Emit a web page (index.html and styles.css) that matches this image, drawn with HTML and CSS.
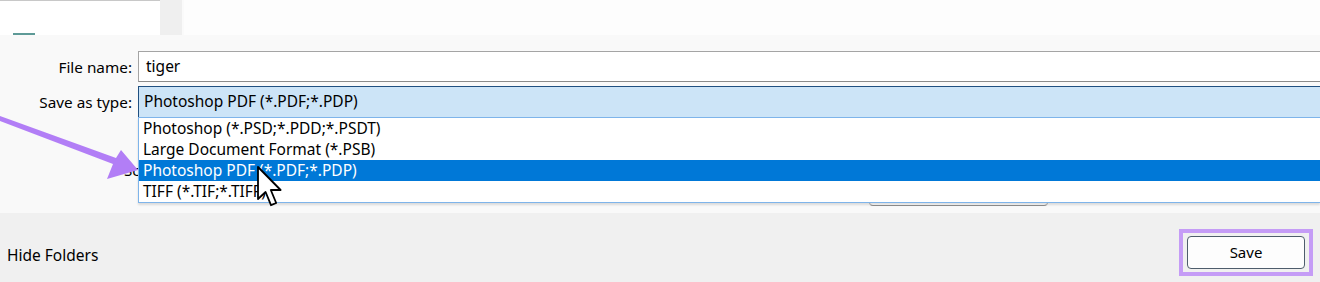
FILE: index.html
```html
<!DOCTYPE html>
<html>
<head>
<meta charset="utf-8">
<link rel="stylesheet" href="styles.css">
</head>
<body>
<div class="page">
  <div class="top">
    <div class="nav"><div class="nav-mark"></div></div>
    <div class="scroll"></div>
    <div class="files"></div>
  </div>
  <div class="form">
    <div class="row row-name">
      <label class="lbl">File name:</label>
      <div class="input">tiger</div>
    </div>
    <div class="row row-type">
      <label class="lbl">Save as type:</label>
      <div class="select">Photoshop PDF (*.PDF;*.PDP)</div>
    </div>
    <div class="row row-opts">
      <span class="opt-lbl">Sc</span>
      <div class="ghost-btn"></div>
    </div>
    <ul class="dropdown">
      <li>Photoshop (*.PSD;*.PDD;*.PSDT)</li>
      <li>Large Document Format (*.PSB)</li>
      <li class="sel">Photoshop PDF (*.PDF;*.PDP)</li>
      <li>TIFF (*.TIF;*.TIFF)</li>
    </ul>
  </div>
  <div class="footer">
    <span class="hide">Hide Folders</span>
    <div class="hl"><button class="save">Save</button></div>
  </div>
  <svg class="arrow" width="150" height="190" viewBox="0 0 150 190">
    <polygon points="0,116 0,121 113,164 107,179 138,170 121,150 116,158" fill="#b27ef6"/>
  </svg>
  <svg class="cursor" width="26" height="42" viewBox="0 0 13 21">
    <path d="M0.5,0.5 L0.5,16.5 L4.3,13 L7,19.6 L9.6,18.5 L6.9,12 L11.8,12 Z" fill="#fff" stroke="#000" stroke-width="0.9" stroke-linejoin="round"/>
  </svg>
</div>
</body>
</html>
```
FILE: styles.css
```css
html, body { margin: 0; padding: 0; }
body { width: 1320px; height: 282px; overflow: hidden; background: #f0f0f0; font-family: "Noto Sans", "Open Sans", sans-serif; font-size: 15px; color: #000; }
.page { position: relative; width: 1320px; height: 282px; }
.top { display: flex; height: 35px; background: #fdfdfd; }
.nav { width: 160px; position: relative; border-top: 1px solid #c8c8c8; box-sizing: border-box; background: #fff; }
.nav-mark { position: absolute; left: 13px; bottom: 0; width: 22px; height: 2px; background: #5e9a97; }
.scroll { width: 22px; background: #efefef; }
.files { flex: 1; background: #fdfdfd; border-left: 2px solid #fafafa; }
.form { position: relative; height: 178px; background: #f9f9f9; box-sizing: border-box; padding-top: 16px; }
.row { display: flex; align-items: center; }
.lbl { width: 132px; text-align: right; padding-right: 6px; font-size: 15.3px; white-space: nowrap; }
.input { flex: 1; height: 31px; box-sizing: border-box; background: #fff; border: 1px solid #a4a4a4; border-right: none; border-bottom-color: #8a8a8a; padding-left: 7px; line-height: 28px; font-size: 15.5px; }
.row-type { margin-top: 4px; }
.select { flex: 1; height: 32px; box-sizing: border-box; background: #cce4f7; border: 1px solid #1f4f80; border-right: none; padding-left: 5px; line-height: 29px; font-size: 15.5px; }
.row-opts { position: relative; height: 46px; margin-top: 42px; align-items: flex-start; }
.opt-lbl { margin-left: 124px; width: 14px; overflow: hidden; white-space: nowrap; line-height: 20px; font-size: 15px; }
.ghost-btn { position: absolute; left: 869px; bottom: 0; width: 179px; height: 30px; box-sizing: border-box; border: 1px solid #b5b5b5; border-bottom-color: #8f8f8f; border-radius: 4px; background: #fdfdfd; }
.dropdown { position: absolute; left: 138px; right: 0; top: 82px; height: 86px; margin: 0; padding: 0; list-style: none; background: #fff; border: 1px solid #7eb4ea; border-right: none; box-sizing: border-box; box-shadow: 0 2px 2px rgba(0,0,0,0.12); font-size: 15.5px; }
.dropdown li { height: 21px; line-height: 21px; padding-left: 4px; white-space: nowrap; }
.dropdown li.sel { background: #0078d7; color: #fff; }
.footer { position: relative; height: 69px; display: flex; align-items: center; justify-content: space-between; padding: 0 7px; }
.hide { font-size: 15.5px; margin-top: 15px; }
.hl { border: 4px solid #c59cf6; padding: 3px 4px; margin-top: 9px; }
.save { width: 118px; height: 33px; box-sizing: border-box; background: #fdfdfd; border: 1px solid #4e5d6c; border-radius: 4px; font-family: inherit; font-size: 15px; color: #000; padding: 0; }
.arrow { position: absolute; left: 0; top: 0; }
.cursor { position: absolute; left: 257px; top: 166px; }
```
